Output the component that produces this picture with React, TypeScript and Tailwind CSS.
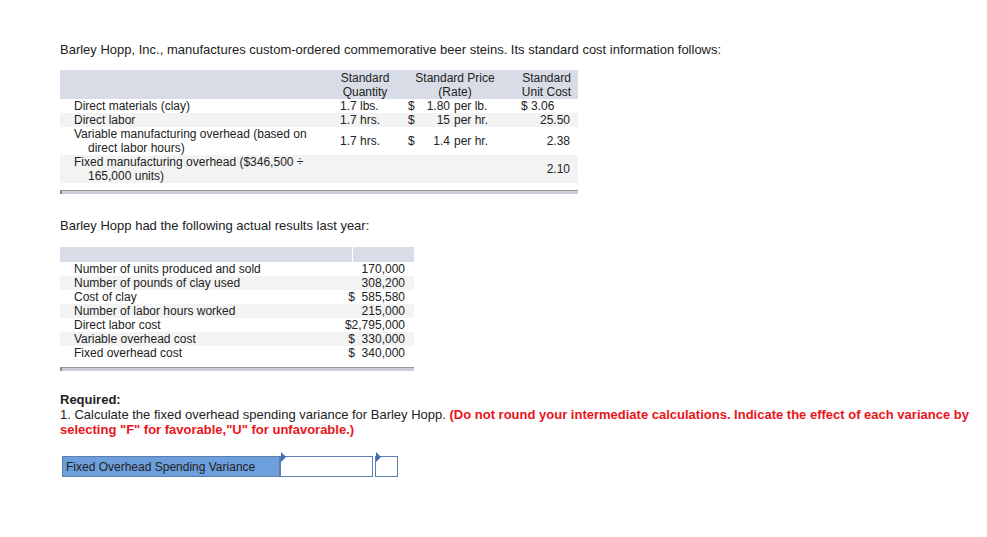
export default function App() {
  const f = { fontFamily: '"Liberation Sans", Arial, sans-serif' };
  const r1 = [
    ["Direct materials (clay)", "1.7 lbs.", "$", "1.80", "per lb.", "$ 3.06", false],
    ["Direct labor", "1.7 hrs.", "$", "15", "per hr.", "25.50", true],
  ];
  const r2: [string, string][] = [
    ["Number of units produced and sold", "170,000"],
    ["Number of pounds of clay used", "308,200"],
    ["Cost of clay", "$  585,580"],
    ["Number of labor hours worked", "215,000"],
    ["Direct labor cost", "$2,795,000"],
    ["Variable overhead cost", "$  330,000"],
    ["Fixed overhead cost", "$  340,000"],
  ];
  return (
    <div style={f} className="w-[987px] h-[537px] bg-white text-[12px] text-[#222] leading-[14px] relative">
      <div className="pt-[43px] pl-[60px] text-[13px]">Barley Hopp, Inc., manufactures custom-ordered commemorative beer steins. Its standard cost information follows:</div>
      <div className="ml-[60px] mt-[13px] w-[518px]">
        <div className="grid grid-cols-[275px_60px_120px_63px] bg-[#d8dce6] h-[29px] pt-[1px] text-center">
          <div />
          <div>Standard<br />Quantity</div>
          <div>Standard Price<br />(Rate)</div>
          <div>Standard<br />Unit Cost</div>
        </div>
        {r1.map((r, i) => (
          <div key={i} className={`grid grid-cols-[275px_60px_120px_63px] h-[14px] ${i % 2 ? "bg-[#f3f3f3]" : "bg-white"}`}>
            <div className="pl-[14px]">{r[0]}</div>
            <div className="pl-[5px]">{r[1]}</div>
            <div className="flex pl-[13px]"><span className="w-[12px]">{r[2]}</span><span className="w-[30px] text-right">{r[3]}</span><span className="pl-[4px]">{r[4]}</span></div>
            <div className={r[6] ? "text-right pr-[8px]" : "pl-[6px]"}>{r[5]}</div>
          </div>
        ))}
        <div className="grid grid-cols-[275px_60px_120px_63px] h-[28px] items-center bg-white">
          <div className="pl-[14px]">Variable manufacturing overhead (based on<br /><span className="pl-[14px]">direct labor hours)</span></div>
          <div className="pl-[5px]">1.7 hrs.</div>
          <div className="flex pl-[13px]"><span className="w-[12px]">$</span><span className="w-[30px] text-right">1.4</span><span className="pl-[4px]">per hr.</span></div>
          <div className="text-right pr-[8px]">2.38</div>
        </div>
        <div className="grid grid-cols-[275px_60px_120px_63px] h-[28px] items-center bg-[#f3f3f3]">
          <div className="pl-[14px]">Fixed manufacturing overhead ($346,500 ÷<br /><span className="pl-[14px]">165,000 units)</span></div>
          <div /><div />
          <div className="text-right pr-[8px]">2.10</div>
        </div>
        <div className="mt-[7px] h-[4px] bg-[#c9ced8] border-l-2 border-[#888] border-t border-t-[#999]" />
      </div>
      <div className="pl-[60px] mt-[25px] text-[13px]">Barley Hopp had the following actual results last year:</div>
      <div className="ml-[60px] mt-[14px] w-[354px]">
        <div className="h-[15px] bg-[#d8dce6] flex"><div className="w-[293px] border-r border-white" /></div>
        {r2.map((r, i) => (
          <div key={i} className={`flex h-[14px] ${i % 2 ? "bg-[#f3f3f3]" : "bg-white"}`}>
            <div className="w-[280px] pl-[14px]">{r[0]}</div>
            <div className="flex-1 text-right pr-[9px] whitespace-pre">{r[1]}</div>
          </div>
        ))}
        <div className="mt-[7px] h-[4px] bg-[#c9ced8] border-l-2 border-[#888] border-t border-t-[#999]" />
      </div>
      <div className="pl-[60px] mt-[21px] text-[13px] leading-[15px]">
        <div className="font-bold">Required:</div>
        <div>1. Calculate the fixed overhead spending variance for Barley Hopp. <span className="font-bold text-[#e8141b]">(Do not round your intermediate calculations. Indicate the effect of each variance by selecting "F" for favorable,"U" for unfavorable.)</span></div>
      </div>
      <div className="ml-[62px] mt-[19px] flex h-[21px]">
        <div className="w-[218px] bg-[#6d9fdc] border border-[#5a7fb0] pl-[3px] flex items-center">Fixed Overhead Spending Variance</div>
        <div className="w-[93px] border border-[#5a7fb0] relative"><div className="absolute left-0 w-0 h-0 border-t-[5px] border-t-transparent border-b-[5px] border-b-transparent border-l-[5px] border-l-[#3a6fb5]" style={{ top: -5 }} /></div>
        <div className="w-[2px]" />
        <div className="w-[23px] border border-[#5a7fb0] relative"><div className="absolute left-0 w-0 h-0 border-t-[5px] border-t-transparent border-b-[5px] border-b-transparent border-l-[5px] border-l-[#3a6fb5]" style={{ top: -5 }} /></div>
      </div>
    </div>
  );
}
